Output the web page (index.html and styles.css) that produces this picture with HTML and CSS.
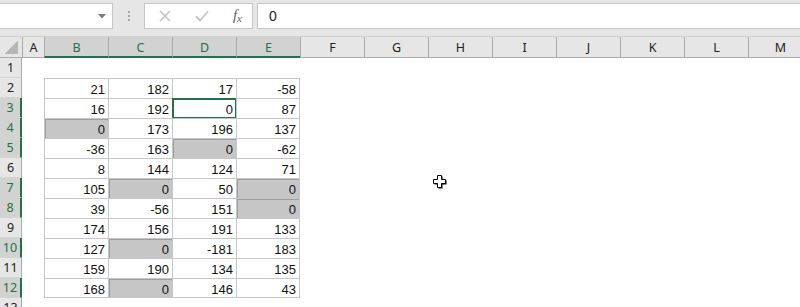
FILE: index.html
```html
<!DOCTYPE html>
<html lang="en">
<head>
  <meta charset="UTF-8">
  <title>Sheet</title>
  <link rel="stylesheet" href="styles.css">
</head>
<body>
  <div class="toolbar">
    <div class="namebox">
      <svg class="drop" width="8" height="5" viewBox="0 0 8 5"><path d="M0 0H8L4 4.5Z" fill="#7a7a7a"/></svg>
    </div>
    <div class="grip"><span></span><span></span><span></span></div>
    <div class="fxbox">
      <svg width="14" height="14" viewBox="0 0 14 14"><path d="M2 2L12 12M12 2L2 12" stroke="#c4c4c4" stroke-width="1.6"/></svg>
      <svg width="16" height="14" viewBox="0 0 16 14"><path d="M2 7.5L6 11.5L14 2.5" stroke="#c4c4c4" stroke-width="1.8" fill="none"/></svg>
      <span class="fx">f<sub>x</sub></span>
    </div>
    <div class="formula">0</div>
  </div>

  <div class="sheet" id="sheet"></div>

  <svg class="cursor" width="16" height="17" viewBox="0 0 16 17">
    <path d="M6.5 2.5H10.5V6.5H14.5V10.5H10.5V14.5H6.5V10.5H2.5V6.5H6.5Z" fill="#000"/>
    <path d="M5.5 1.5H9.5V5.5H13.5V9.5H9.5V13.5H5.5V9.5H1.5V5.5H5.5Z" fill="#fff" stroke="#000" stroke-width="1"/>
  </svg>

  <script>
    const data = [
      [21, 182, 17, -58],
      [16, 192, 0, 87],
      [0, 173, 196, 137],
      [-36, 163, 0, -62],
      [8, 144, 124, 71],
      [105, 0, 50, 0],
      [39, -56, 151, 0],
      [174, 156, 191, 133],
      [127, 0, -181, 183],
      [159, 190, 134, 135],
      [168, 0, 146, 43]
    ];
    // selected cells as "row,col" (col 0 = B)
    const picked = ["4,0", "5,2", "7,1", "7,3", "8,3", "10,1", "12,1"];
    const active = "3,2";
    const selRows = [3, 4, 5, 7, 8, 10, 12];
    const letters = "ABCDEFGHIJKLM".split("");

    const sheet = document.getElementById("sheet");
    function cell(cls, text) {
      const d = document.createElement("div");
      d.className = cls;
      if (text !== undefined) d.textContent = text;
      sheet.appendChild(d);
    }

    cell("corner");
    letters.forEach((l, i) => {
      cell("colhead" + (i >= 1 && i <= 4 ? " sel" : ""), l);
    });

    for (let r = 1; r <= 13; r++) {
      cell("rowhead" + (selRows.includes(r) ? " sel" : ""), r);
      for (let c = 0; c < 13; c++) {
        const dc = c - 1;
        if (r >= 2 && r <= 12 && dc >= 0 && dc <= 3) {
          let cls = "cell data";
          if (r === 2) cls += " top";
          if (r === 12) cls += " bottom";
          if (dc === 3) cls += " last";
          const key = r + "," + dc;
          if (picked.includes(key)) cls += " picked";
          if (key === active) cls += " active";
          cell(cls, data[r - 2][dc]);
        } else {
          cell("cell");
        }
      }
    }
  </script>
</body>
</html>
```

FILE: styles.css
```css
body {
  margin: 0;
  width: 800px;
  height: 307px;
  overflow: hidden;
  position: relative;
  background: #fff;
  font-family: "Liberation Sans", Arial, sans-serif;
}
.toolbar {
  height: 37px;
  box-sizing: border-box;
  background: #e6e6e6;
  border-bottom: 1px solid #d0d0d0;
  padding-top: 3px;
  display: flex;
  align-items: flex-start;
}
.namebox {
  width: 113px;
  height: 26px;
  box-sizing: border-box;
  background: #fff;
  border: 1px solid #c6c6c6;
  border-left: none;
  display: flex;
  align-items: center;
  justify-content: flex-end;
  padding-right: 6px;
}
.grip {
  width: 31px;
  height: 26px;
  display: flex;
  flex-direction: column;
  align-items: center;
  justify-content: center;
  gap: 2px;
}
.grip span {
  width: 2px;
  height: 2px;
  background: #a8a8a8;
}
.fxbox {
  width: 109px;
  height: 26px;
  box-sizing: border-box;
  background: #fff;
  border: 1px solid #c6c6c6;
  display: flex;
  align-items: center;
  justify-content: space-between;
  padding: 0 10px 0 13px;
}
.fx {
  font-family: "Liberation Serif", serif;
  font-style: italic;
  font-size: 15px;
  color: #606060;
  line-height: 1;
}
.fx sub {
  font-size: 11px;
  vertical-align: -2px;
}
.formula {
  flex: 1;
  margin-left: 4px;
  height: 26px;
  box-sizing: border-box;
  background: #fff;
  border: 1px solid #c6c6c6;
  border-right: none;
  padding-left: 11px;
  font-size: 14px;
  line-height: 24px;
  color: #222;
}
.sheet {
  display: grid;
  grid-template-columns: 22px 22px repeat(12, 64px);
  grid-template-rows: 21px repeat(13, 20px);
}
.corner {
  background: #e6e6e6 linear-gradient(to top left, #b7b7b7 50%, transparent 50%) no-repeat;
  background-size: 13px 13px;
  background-position: 5px 4px;
  border-bottom: 1px solid #ababab;
}
.colhead {
  background: #e6e6e6;
  border-left: 1px solid #ababab;
  border-bottom: 1px solid #ababab;
  font-family: "Noto Sans", sans-serif;
  font-size: 12.5px;
  line-height: 21px;
  text-align: center;
  color: #222;
  box-sizing: border-box;
}
.colhead.sel {
  background: #d2d2d2;
  color: #217346;
  border-bottom: 2px solid #217346;
}
.rowhead {
  background: #e6e6e6;
  border-right: 1px solid #ababab;
  border-bottom: 1px solid #d4d4d4;
  box-sizing: border-box;
  font-family: "Noto Sans", sans-serif;
  font-size: 12.5px;
  line-height: 20px;
  text-align: center;
  color: #222;
}
.rowhead.sel {
  background: #d2d2d2;
  color: #217346;
  border-right: 2px solid #217346;
}
.cell {
  box-sizing: border-box;
  font-size: 13px;
  line-height: 21px;
  text-align: right;
  padding-right: 3px;
  color: #111;
}
.data {
  border-left: 1px solid #c6c6c6;
  border-top: 1px solid #c6c6c6;
}
.data.bottom {
  border-bottom: 1px solid #c6c6c6;
}
.data.last {
  border-right: 1px solid #c6c6c6;
}
.data.picked {
  background: #c6c6c6;
  box-shadow: inset 1px 1px 0 #9e9e9e;
}
.data.active {
  box-shadow: inset 0 0 0 1px #217346;
  border-color: #217346;
}
.cursor {
  position: absolute;
  left: 432px;
  top: 174px;
}
```
